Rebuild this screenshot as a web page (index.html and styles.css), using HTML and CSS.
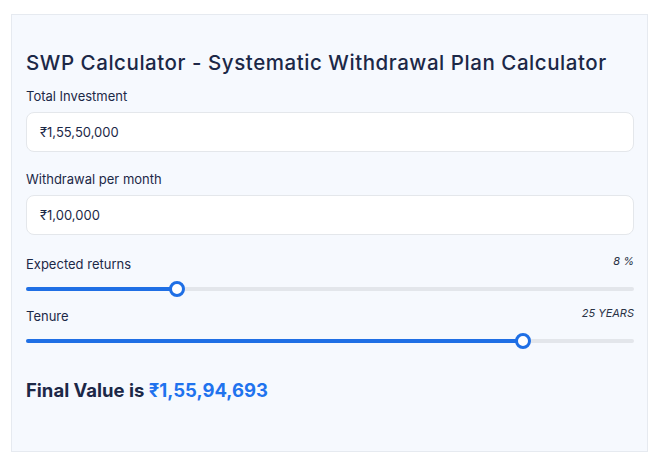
FILE: index.html
```html
<!DOCTYPE html>
<html lang="en">

<head>
    <meta charset="UTF-8">
    <meta name="viewport" content="width=device-width, initial-scale=1.0">
    <title>SWP Calculator</title>
    <link rel="stylesheet" href="styles.css">
</head>

<body>
    <div class="calculator">
        <h1 class="title">SWP Calculator - Systematic Withdrawal Plan Calculator</h1>

        <div class="field">
            <label class="label">Total Investment</label>
            <div class="input">₹1,55,50,000</div>
        </div>

        <div class="field">
            <label class="label">Withdrawal per month</label>
            <div class="input">₹1,00,000</div>
        </div>

        <div class="slider-field">
            <div class="slider-head">
                <label class="label">Expected returns</label>
                <span class="slider-value">8 %</span>
            </div>
            <div class="track">
                <div class="fill" style="width: 151px"></div>
                <div class="thumb" style="left: 143px"></div>
            </div>
        </div>

        <div class="slider-field">
            <div class="slider-head">
                <label class="label">Tenure</label>
                <span class="slider-value">25 YEARS</span>
            </div>
            <div class="track">
                <div class="fill" style="width: 497px"></div>
                <div class="thumb" style="left: 489px"></div>
            </div>
        </div>

        <div class="result">Final Value is <span class="amount">₹1,55,94,693</span></div>
    </div>
</body>

</html>
```

FILE: styles.css
```css
body {
    margin: 0;
    padding: 14px 12px 8px 11px;
    background-color: #ffffff;
    font-family: Inter, "Noto Sans", sans-serif;
    color: #1c2847;
}

.calculator {
    box-sizing: border-box;
    height: 438px;
    padding: 36px 13px 0 14px;
    background-color: #f6f9fe;
    border: 1px solid #e6eaf0;
}

.title {
    margin: 0 0 13px;
    font-size: 20.5px;
    font-weight: 500;
    line-height: 24px;
    letter-spacing: 0.55px;
}

.label {
    display: block;
    font-size: 13px;
    line-height: 16px;
}

.field {
    margin-bottom: 19px;
}

.field .label {
    margin-bottom: 8px;
}

.input {
    box-sizing: border-box;
    height: 40px;
    padding: 0 13px;
    display: flex;
    align-items: center;
    background-color: #ffffff;
    border: 1px solid #e4e7eb;
    border-radius: 8px;
    font-size: 13px;
}

.slider-field {
    margin-bottom: 15px;
}

.slider-head {
    display: flex;
    justify-content: space-between;
    align-items: flex-end;
}

.slider-value {
    font-size: 11px;
    font-style: italic;
    color: #2a3245;
    margin-bottom: 4px;
}

.track {
    position: relative;
    height: 4px;
    margin-top: 15px;
    border-radius: 2px;
    background-color: #e3e6eb;
}

.fill {
    height: 4px;
    border-radius: 2px;
    background-color: #1f6fe5;
}

.thumb {
    position: absolute;
    top: -6px;
    box-sizing: border-box;
    width: 16px;
    height: 16px;
    border: 3px solid #1f6fe5;
    border-radius: 50%;
    background-color: #ffffff;
}

.result {
    margin-top: 36px;
    font-size: 18.5px;
    font-weight: 700;
}

.amount {
    color: #1f73ee;
}
```
